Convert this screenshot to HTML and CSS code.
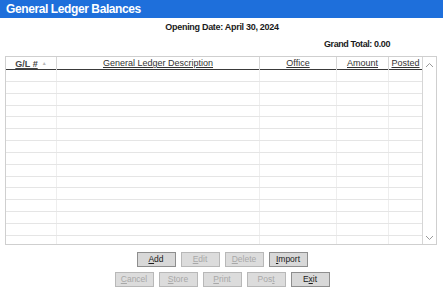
FILE: index.html
```html
<!DOCTYPE html>
<html>
<head>
<meta charset="utf-8">
<link rel="stylesheet" href="styles.css">
</head>
<body>
<div class="titlebar">General Ledger Balances</div>
<div class="opening">Opening Date: April 30, 2024</div>
<div class="total">Grand Total: 0.00</div>
<div class="grid">
  <div class="table">
    <div class="row head">
      <div class="cell"><span class="u b">G/L #</span><span class="sort">&#9650;</span></div>
      <div class="cell"><span class="u">General Ledger Description</span></div>
      <div class="cell"><span class="u">Office</span></div>
      <div class="cell"><span class="u">Amount</span></div>
      <div class="cell"><span class="u">Posted</span></div>
    </div>
    <div class="body">
      <div class="row"><div class="cell"></div><div class="cell"></div><div class="cell"></div><div class="cell"></div><div class="cell"></div></div>
      <div class="row"><div class="cell"></div><div class="cell"></div><div class="cell"></div><div class="cell"></div><div class="cell"></div></div>
      <div class="row"><div class="cell"></div><div class="cell"></div><div class="cell"></div><div class="cell"></div><div class="cell"></div></div>
      <div class="row"><div class="cell"></div><div class="cell"></div><div class="cell"></div><div class="cell"></div><div class="cell"></div></div>
      <div class="row"><div class="cell"></div><div class="cell"></div><div class="cell"></div><div class="cell"></div><div class="cell"></div></div>
      <div class="row"><div class="cell"></div><div class="cell"></div><div class="cell"></div><div class="cell"></div><div class="cell"></div></div>
      <div class="row"><div class="cell"></div><div class="cell"></div><div class="cell"></div><div class="cell"></div><div class="cell"></div></div>
      <div class="row"><div class="cell"></div><div class="cell"></div><div class="cell"></div><div class="cell"></div><div class="cell"></div></div>
      <div class="row"><div class="cell"></div><div class="cell"></div><div class="cell"></div><div class="cell"></div><div class="cell"></div></div>
      <div class="row"><div class="cell"></div><div class="cell"></div><div class="cell"></div><div class="cell"></div><div class="cell"></div></div>
      <div class="row"><div class="cell"></div><div class="cell"></div><div class="cell"></div><div class="cell"></div><div class="cell"></div></div>
      <div class="row"><div class="cell"></div><div class="cell"></div><div class="cell"></div><div class="cell"></div><div class="cell"></div></div>
      <div class="row"><div class="cell"></div><div class="cell"></div><div class="cell"></div><div class="cell"></div><div class="cell"></div></div>
      <div class="row"><div class="cell"></div><div class="cell"></div><div class="cell"></div><div class="cell"></div><div class="cell"></div></div>
      <div class="row last"><div class="cell"></div><div class="cell"></div><div class="cell"></div><div class="cell"></div><div class="cell"></div></div>
    </div>
  </div>
  <div class="scroll">
    <svg class="arrow" width="9" height="6" viewBox="0 0 9 6"><path d="M1 5 L4.5 1.5 L8 5" fill="none" stroke="#9a9a9a" stroke-width="1"/></svg>
    <svg class="arrow" width="9" height="6" viewBox="0 0 9 6"><path d="M1 1 L4.5 4.5 L8 1" fill="none" stroke="#9a9a9a" stroke-width="1"/></svg>
  </div>
</div>
<div class="buttons first">
  <button class="btn on"><u>A</u>dd</button>
  <button class="btn off"><u>E</u>dit</button>
  <button class="btn off"><u>D</u>elete</button>
  <button class="btn on"><u>I</u>mport</button>
</div>
<div class="buttons second">
  <button class="btn off"><u>C</u>ancel</button>
  <button class="btn off"><u>S</u>tore</button>
  <button class="btn off"><u>P</u>rint</button>
  <button class="btn off">Pos<u>t</u></button>
  <button class="btn on">E<u>x</u>it</button>
</div>
</body>
</html>
```
FILE: styles.css
```css
* { box-sizing: border-box; }
html, body { margin: 0; padding: 0; background: #fff; }
body {
  width: 443px;
  height: 297px;
  overflow: hidden;
  font-family: "Liberation Sans", Arial, sans-serif;
  color: #1a1a1a;
}
.titlebar {
  height: 18px;
  background: #1e6fdb;
  color: #fff;
  font-weight: bold;
  font-size: 12px;
  letter-spacing: -0.4px;
  line-height: 18px;
  padding-left: 6px;
}
.opening {
  text-align: center;
  font-weight: bold;
  font-size: 9px;
  letter-spacing: -0.3px;
  line-height: 10px;
  margin-top: 4px;
  padding-left: 1px;
}
.total {
  text-align: right;
  font-weight: bold;
  font-size: 9px;
  letter-spacing: -0.4px;
  line-height: 10px;
  margin-top: 7px;
  padding-right: 53px;
}
.grid {
  margin: 7px 6px 0 5px;
  height: 189px;
  border: 1px solid #cfcfcf;
  display: flex;
}
.table {
  width: 417px;
  display: flex;
  flex-direction: column;
  overflow: hidden;
}
.row {
  display: grid;
  grid-template-columns: 51px 203px 77px 52px 34px;
  height: 11.85px;
  border-bottom: 1px solid #e5e5e5;
}
.row .cell { border-right: 1px solid #eeeeee; }
.head {
  height: 13px;
  border-bottom: 1px solid #3a3a3a;
}
.head .cell {
  border-right: 1px solid #d6d6d6;
  font-size: 9px;
  line-height: 12px;
  color: #333;
  text-align: center;
}
.u { text-decoration: underline; }
.b { font-weight: bold; color: #444; }
.sort {
  font-size: 5px;
  color: #b8b8b8;
  margin-left: 4px;
  vertical-align: 2px;
}
.last { border-bottom: none; }
.scroll {
  width: 14px;
  border-left: 1px solid #d6d6d6;
  display: flex;
  flex-direction: column;
  justify-content: space-between;
  align-items: center;
  padding: 5px 0 3px;
}
.arrow { display: block; }
.buttons {
  display: flex;
  justify-content: center;
  gap: 5px;
  padding-left: 1px;
}
.first { margin-top: 7px; }
.second { margin-top: 5px; }
.btn {
  width: 39px;
  height: 15px;
  padding: 0;
  margin: 0;
  background: #dcdcdc;
  border: 1px solid #b8b8b8;
  font-family: "Liberation Sans", Arial, sans-serif;
  font-size: 8.5px;
  line-height: 13px;
  color: #a8a8a8;
}
.btn.on {
  color: #1a1a1a;
  border-color: #8e8e8e;
  background: #d8d8d8;
}
```
